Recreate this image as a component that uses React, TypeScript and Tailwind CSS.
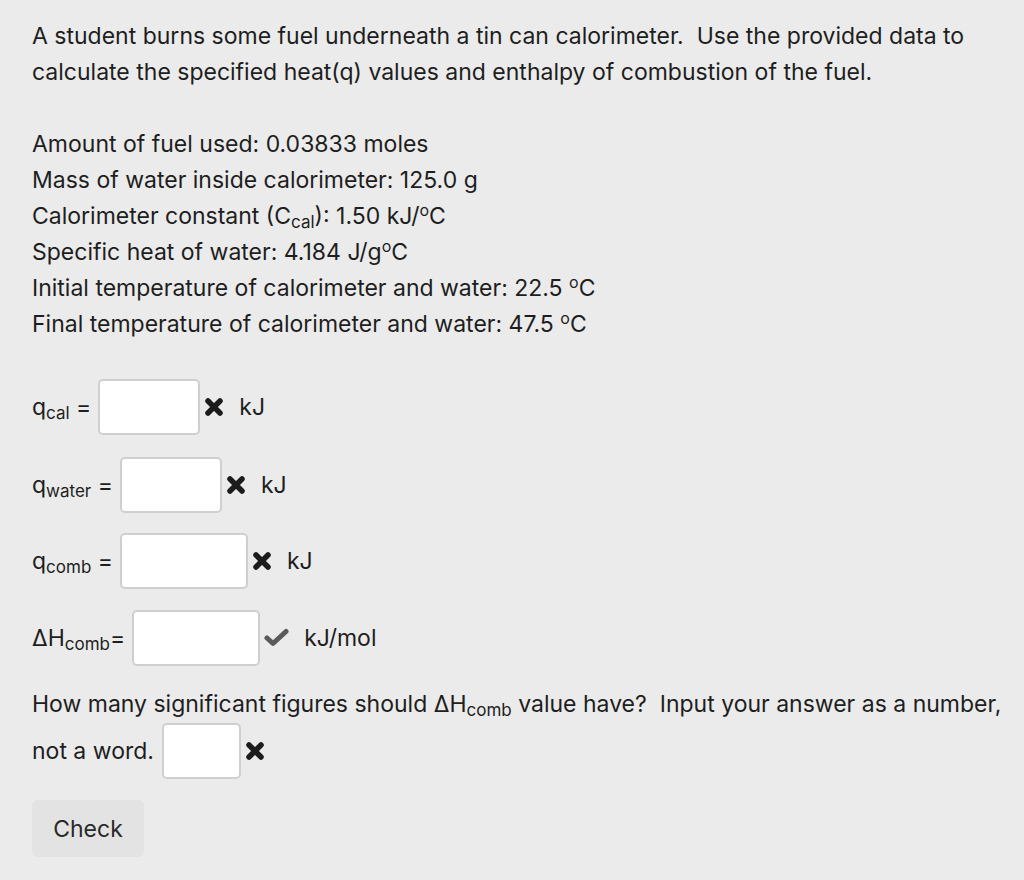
import React from 'react';

const font = { fontFamily: 'Inter, "Liberation Sans", sans-serif' };

function Cross() {
  return (
    <svg width="20" height="20" viewBox="0 0 20 20" className="shrink-0">
      <path d="M4 4 L16 16 M16 4 L4 16" stroke="#1c1c1c" strokeWidth="5.5" strokeLinecap="round" />
    </svg>
  );
}

function Tick() {
  return (
    <svg width="25" height="20" viewBox="0 0 25 20" className="shrink-0">
      <path d="M3 10 L9 15.5 L22 3.5" stroke="#5a5a5a" strokeWidth="5" fill="none" strokeLinecap="round" strokeLinejoin="round" />
    </svg>
  );
}

function Box({ w }: { w: string }) {
  return <input className={`h-[56px] ${w} shrink-0 rounded-[5px] border-2 border-[#cfcfcf] bg-white`} />;
}

function Row({ label, w, mark, unit, className }: { label: React.ReactNode; w: string; mark: React.ReactNode; unit: string; className: string }) {
  return (
    <div className={`flex items-center ${className}`}>
      <span className="mr-[7px]">{label}</span>
      <Box w={w} />
      <span className="ml-[4px] mr-[15px]">{mark}</span>
      <span>{unit}</span>
    </div>
  );
}

const sub = 'text-[17px] leading-none';
const sup = 'text-[16px] leading-none';

export default function App() {
  return (
    <main className="min-h-[880px] bg-[#ebebeb] pl-[32px] pr-[16px] pt-[18px] text-[23px] leading-[36px] text-[#1e1e1e]" style={font}>
      <p className="pr-[40px]">
        A student burns some fuel underneath a tin can calorimeter.&nbsp; Use the provided data to calculate the specified heat(q) values and enthalpy of combustion of the fuel.
      </p>
      <div className="mt-[36px]">
        <p>Amount of fuel used: 0.03833 moles</p>
        <p>Mass of water inside calorimeter: 125.0 g</p>
        <p>
          Calorimeter constant (C<sub className={sub}>cal</sub>): 1.50 kJ/<sup className={sup}>o</sup>C
        </p>
        <p>
          Specific heat of water: 4.184 J/g<sup className={sup}>o</sup>C
        </p>
        <p>
          Initial temperature of calorimeter and water: 22.5 <sup className={sup}>o</sup>C
        </p>
        <p>
          Final temperature of calorimeter and water: 47.5 <sup className={sup}>o</sup>C
        </p>
      </div>

      <Row className="mt-[37px]" label={<>q<sub className={sub}>cal</sub> =</>} w="w-[102px]" mark={<Cross />} unit="kJ" />
      <Row className="mt-[22px]" label={<>q<sub className={sub}>water</sub> =</>} w="w-[102px]" mark={<Cross />} unit="kJ" />
      <Row className="mt-[20px]" label={<>q<sub className={sub}>comb</sub> =</>} w="w-[128px]" mark={<Cross />} unit="kJ" />
      <Row className="mt-[21px]" label={<>ΔH<sub className={sub}>comb</sub>=</>} w="w-[128px]" mark={<Tick />} unit="kJ/mol" />

      <p className="mt-[20px] whitespace-nowrap">
        How many significant figures should ΔH<sub className={sub}>comb</sub> value have?&nbsp; Input your answer as a number,
      </p>
      <div className="mt-[1px] flex items-center">
        <span className="mr-[8px]">not a word.</span>
        <input className="h-[56px] w-[79px] shrink-0 rounded-[5px] border-2 border-[#cfcfcf] bg-white" />
        <span className="ml-[4px]"><Cross /></span>
      </div>

      <button className="mt-[21px] h-[57px] w-[112px] rounded-[6px] bg-[#e3e3e3] text-[23px] text-[#2a2a2a]" style={font}>
        Check
      </button>
    </main>
  );
}
